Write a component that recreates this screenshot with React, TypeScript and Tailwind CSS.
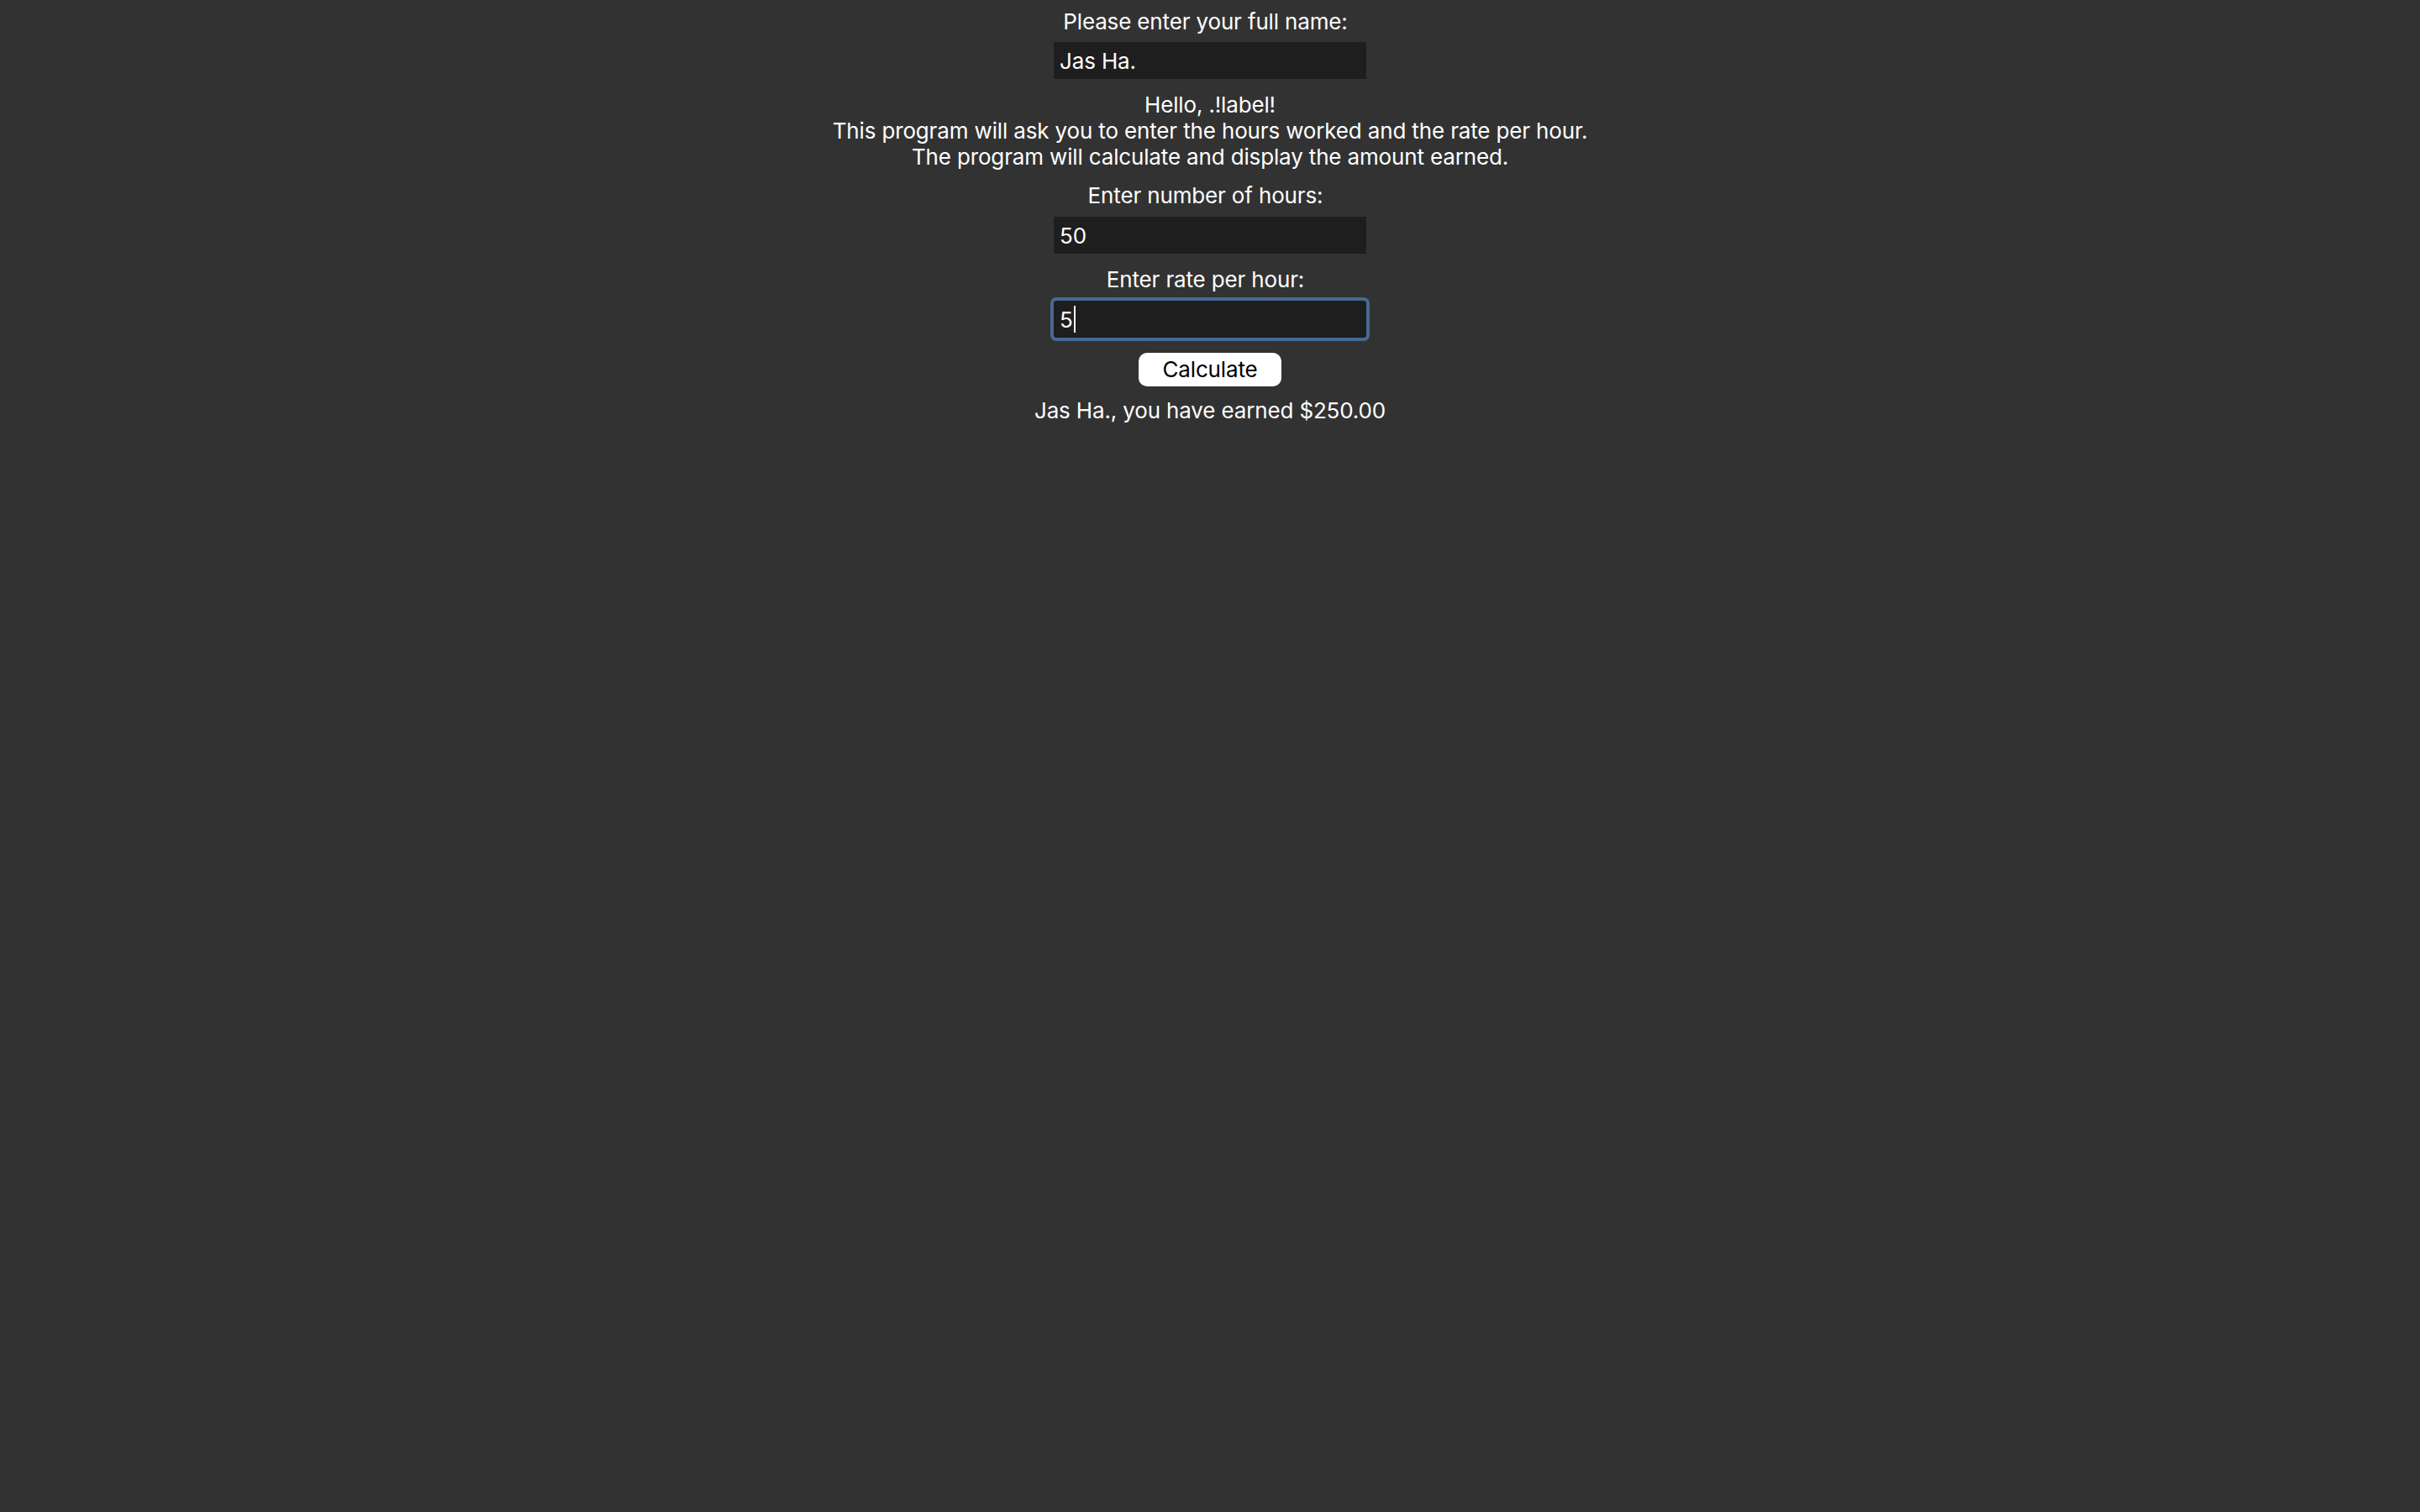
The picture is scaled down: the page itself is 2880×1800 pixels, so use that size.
import { useState } from 'react';

const font = { fontFamily: 'Inter, "Noto Sans", sans-serif' };

function Label({ children, className = '' }: { children: React.ReactNode; className?: string }) {
  return (
    <p className={`text-[26px] leading-[31px] tracking-[-0.15px] text-white text-center ${className}`}>
      {children}
    </p>
  );
}

export default function App() {
  const [name, setName] = useState('Jas Ha.');
  const [hours, setHours] = useState('50');

  return (
    <div className="min-h-screen w-full bg-[#323232] text-white" style={font}>
      <div className="flex flex-col items-center pt-[10px]">
        <Label className="pr-[11px]">Please enter your full name:</Label>

        <input
          value={name}
          onChange={(e) => setName(e.target.value)}
          className="mt-[9px] h-[44px] w-[372px] bg-[#1e1e1e] px-[7px] text-[26px] tracking-[-0.15px] text-white outline-none"
        />

        <div className="mt-[15px] flex flex-col items-center">
          <Label>Hello, .!label!</Label>
          <Label>This program will ask you to enter the hours worked and the rate per hour.</Label>
          <Label>The program will calculate and display the amount earned.</Label>
        </div>

        <Label className="mt-[15px] pr-[11px]">Enter number of hours:</Label>

        <input
          value={hours}
          onChange={(e) => setHours(e.target.value)}
          className="mt-[10px] h-[44px] w-[372px] bg-[#1e1e1e] px-[7px] text-[26px] tracking-[-0.15px] text-white outline-none"
        />

        <Label className="mt-[15px] pr-[11px]">Enter rate per hour:</Label>

        {/* focused entry */}
        <div className="mt-[10px] flex h-[44px] w-[372px] items-center rounded-[3px] bg-[#1e1e1e] px-[7px] text-[26px] text-white outline outline-4 outline-[#486995]">
          <span>5</span>
          <span className="ml-[1px] h-[32px] w-[2px] bg-white" />
        </div>

        <button className="mt-[18px] flex h-[40px] w-[170px] items-center justify-center rounded-[10px] bg-white pb-[2px] text-[26px] tracking-[-0.15px] text-black">
          Calculate
        </button>

        <Label className="mt-[13px] tracking-[-0.3px]">Jas Ha., you have earned $250.00</Label>
      </div>
    </div>
  );
}
